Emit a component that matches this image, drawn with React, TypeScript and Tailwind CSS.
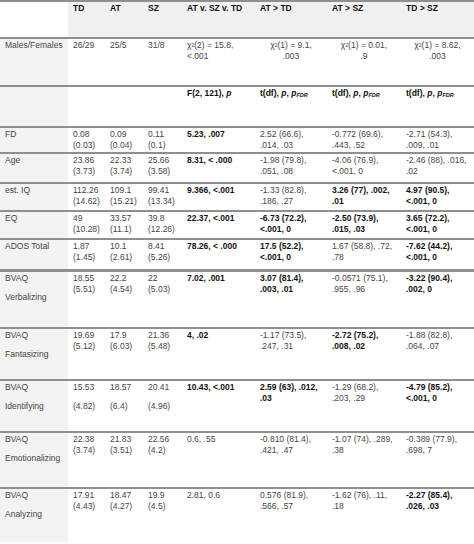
import React from "react";

type Cell = {
  lines: React.ReactNode[];
  b?: boolean;
  c?: boolean;
  gap?: boolean;
};

const Chi = ({ d }: { d: string }) => (
  <>
    χ<sup className="text-[5px] relative -top-[1px]">2</sup>({d})
  </>
);

const Pfdr = () => (
  <>
    t(df), <i>p</i>, <i>p</i>
    <i className="text-[5.5px] relative top-[0.5px]">FDR</i>
  </>
);

const cols =
  "grid grid-cols-[68px_37px_38px_39px_73px_72px_74px_73px] border-t-2 border-[#8f8f8f]";

type Row = { h: string; cells: Cell[]; header?: boolean; thick?: boolean };

const n = (...lines: React.ReactNode[]): Cell => ({ lines });
const bb = (...lines: React.ReactNode[]): Cell => ({ lines, b: true });
const g = (a: string, b: string): Cell => ({ lines: [a, b], gap: true });

const rows: Row[] = [
  {
    h: "h-[37px]",
    header: true,
    cells: [
      n(""),
      bb("TD"),
      bb("AT"),
      bb("SZ"),
      bb("AT v. SZ v. TD"),
      bb("AT > TD"),
      bb("AT > SZ"),
      bb("TD > SZ"),
    ],
  },
  {
    h: "h-[48px]",
    cells: [
      n("Males/Females"),
      n("26/29"),
      n("25/5"),
      n("31/8"),
      n(<><Chi d="2" /> = 15.8,</>, "<.001"),
      { lines: [<><Chi d="1" /> = 9.1,</>, ".003"], c: true },
      { lines: [<><Chi d="1" /> = 0.01,</>, ".9"], c: true },
      { lines: [<><Chi d="1" /> = 8.62,</>, ".003"], c: true },
    ],
  },
  {
    h: "h-[41px]",
    cells: [
      n(""),
      n(""),
      n(""),
      n(""),
      bb(<>F(2, 121), <i>p</i></>),
      bb(<Pfdr />),
      bb(<Pfdr />),
      bb(<Pfdr />),
    ],
  },
  {
    h: "h-[26px]",
    cells: [
      n("FD"),
      n("0.08", "(0.03)"),
      n("0.09", "(0.04)"),
      n("0.11", "(0.1)"),
      bb("5.23, .007"),
      n("2.52 (66.6),", ".014, .03"),
      n("-0.772 (69.6),", ".443, .52"),
      n("-2.71 (54.3),", ".009, .01"),
    ],
  },
  {
    h: "h-[30px]",
    cells: [
      n("Age"),
      n("23.86", "(3.73)"),
      n("22.33", "(3.74)"),
      n("25.66", "(3.58)"),
      bb("8.31, < .000"),
      n("-1.98 (79.8),", ".051, .08"),
      n("-4.06 (76.9),", "<.001, 0"),
      n("-2.46 (88), .016,", ".02"),
    ],
  },
  {
    h: "h-[28px]",
    cells: [
      n("est. IQ"),
      n("112.26", "(14.62)"),
      n("109.1", "(15.21)"),
      n("99.41", "(13.34)"),
      bb("9.366, <.001"),
      n("-1.33 (82.8),", ".186, .27"),
      bb("3.26 (77), .002,", ".01"),
      bb("4.97 (90.5),", "<.001, 0"),
    ],
  },
  {
    h: "h-[28px]",
    cells: [
      n("EQ"),
      n("49", "(10.28)"),
      n("33.57", "(11.1)"),
      n("39.8", "(12.26)"),
      bb("22.37, <.001"),
      bb("-6.73 (72.2),", "<.001, 0"),
      bb("-2.50 (73.9),", ".015, .03"),
      bb("3.65 (72.2),", "<.001, 0"),
    ],
  },
  {
    h: "h-[31px]",
    cells: [
      n("ADOS Total"),
      n("1.87", "(1.45)"),
      n("10.1", "(2.61)"),
      n("8.41", "(5.26)"),
      bb("78.26, < .000"),
      bb("17.5 (52.2),", "<.001, 0"),
      n("1.67 (58.8), .72,", ".78"),
      bb("-7.62 (44.2),", "<.001, 0"),
    ],
  },
  {
    h: "h-[58px]",
    thick: true,
    cells: [
      g("BVAQ", "Verbalizing"),
      n("18.55", "(5.51)"),
      n("22.2", "(4.54)"),
      n("22", "(5.03)"),
      bb("7.02, .001"),
      bb("3.07 (81.4),", ".003, .01"),
      n("-0.0571 (75.1),", ".955, .96"),
      bb("-3.22 (90.4),", ".002, 0"),
    ],
  },
  {
    h: "h-[52px]",
    cells: [
      g("BVAQ", "Fantasizing"),
      n("19.69", "(5.12)"),
      n("17.9", "(6.03)"),
      n("21.36", "(5.48)"),
      bb("4, .02"),
      n("-1.17 (73.5),", ".247, .31"),
      bb("-2.72 (75.2),", ".008, .02"),
      n("-1.88 (82.8),", ".064, .07"),
    ],
  },
  {
    h: "h-[52px]",
    cells: [
      g("BVAQ", "Identifying"),
      g("15.53", "(4.82)"),
      g("18.57", "(6.4)"),
      g("20.41", "(4.96)"),
      bb("10.43, <.001"),
      bb("2.59 (63), .012,", ".03"),
      n("-1.29 (68.2),", ".203, .29"),
      bb("-4.79 (85.2),", "<.001, 0"),
    ],
  },
  {
    h: "h-[56px]",
    cells: [
      g("BVAQ", "Emotionalizing"),
      n("22.38", "(3.74)"),
      n("21.83", "(3.51)"),
      n("22.56", "(4.2)"),
      n("0.6, .55"),
      n("-0.810 (81.4),", ".421, .47"),
      n("-1.07 (74), .289,", ".38"),
      n("-0.389 (77.9),", ".698, 7"),
    ],
  },
  {
    h: "h-[55px]",
    cells: [
      g("BVAQ", "Analyzing"),
      n("17.91", "(4.43)"),
      n("18.47", "(4.27)"),
      n("19.9", "(4.5)"),
      n("2.81, 0.6"),
      n("0.576 (81.9),", ".566, .57"),
      n("-1.62 (76), .11,", ".18"),
      bb("-2.27 (85.4),", ".026, .03"),
    ],
  },
];

export default function App() {
  return (
    <div className="w-[474px] h-[544px] bg-white overflow-hidden font-['Liberation_Sans',Arial,sans-serif] text-[8.5px] leading-[10.5px]">
      {rows.map((r, ri) => (
        <div
          key={ri}
          className={`${cols} ${r.h} ${r.thick ? "border-t-[3px] border-[#7a7a7a]" : ""}`}
        >
          {r.cells.map((c, ci) => {
            let bg = "";
            if (r.header) bg = ci === 0 ? "bg-white" : "bg-[#f0f0f0]";
            else if (ci === 0) bg = "bg-[#f3f3f3]";
            return (
              <div
                key={ci}
                className={`${bg} px-[5px] pt-[1px] whitespace-nowrap ${
                  c.b ? "font-bold text-[#111]" : "text-[#444]"
                } ${c.c ? "text-center" : "text-left"}`}
              >
                {c.lines.map((l, li) => (
                  <div key={li} className={c.gap && li > 0 ? "mt-[8px]" : ""}>
                    {l === "" ? "\u00a0" : l}
                  </div>
                ))}
              </div>
            );
          })}
        </div>
      ))}
    </div>
  );
}
